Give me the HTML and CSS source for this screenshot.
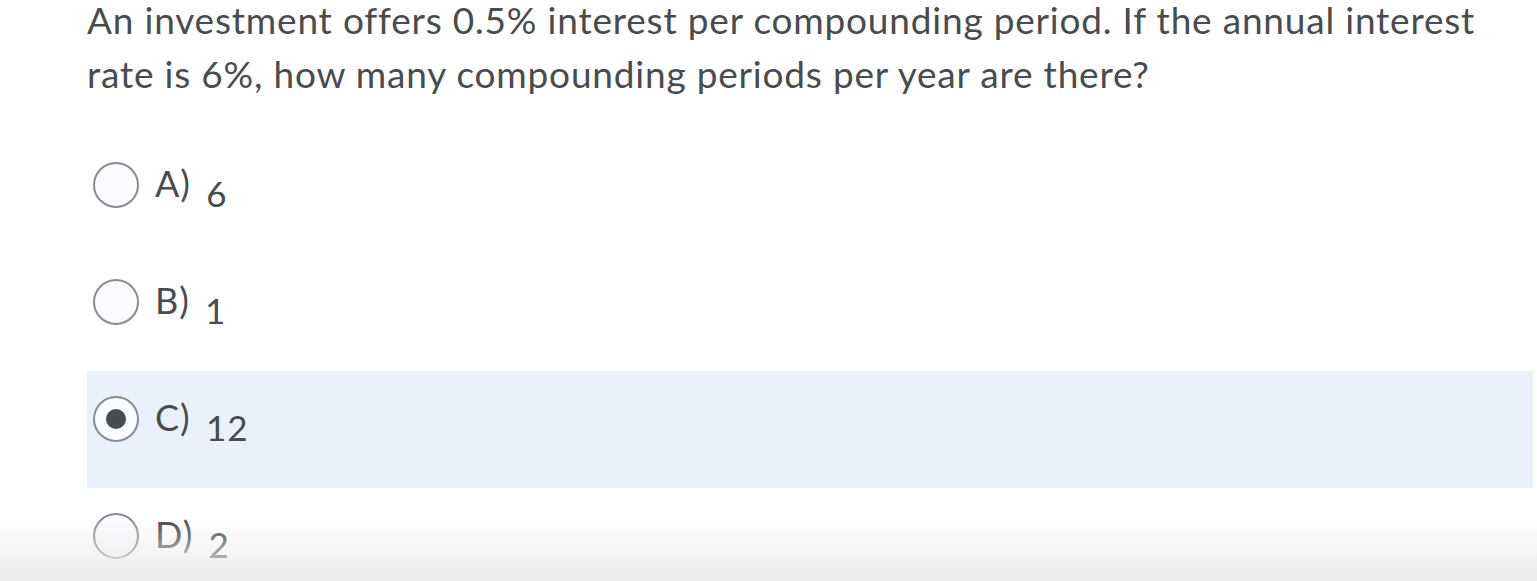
FILE: index.html
```html
<!DOCTYPE html>
<html lang="en">
<head>
<meta charset="utf-8">
<title>Quiz question</title>
<link rel="stylesheet" href="styles.css">
</head>
<body>
<main class="question">
  <p class="question-text">An investment offers 0.5% interest per compounding period. If the annual interest rate is 6%, how many compounding periods per year are there?</p>
  <ul class="options">
    <li class="option"><span class="radio"></span><span class="label">A) <span class="answer">6</span></span></li>
    <li class="option"><span class="radio"></span><span class="label">B) <span class="answer">1</span></span></li>
    <li class="option selected"><span class="radio checked"></span><span class="label">C) <span class="answer">12</span></span></li>
    <li class="option"><span class="radio"></span><span class="label">D) <span class="answer">2</span></span></li>
  </ul>
</main>
<div class="footer-fade"></div>
</body>
</html>
```
FILE: styles.css
```css
html, body {
  margin: 0;
  padding: 0;
  background: #ffffff;
  overflow: hidden;
}
body {
  font-family: Lato, "Open Sans", sans-serif;
  color: #494c4e;
}
.question {
  padding: 0 4px 0 87px;
  margin-top: -7px;
}
.question-text {
  margin: 0;
  font-size: 37px;
  line-height: 54px;
  letter-spacing: 0.8px;
  width: 1420px;
}
.options {
  list-style: none;
  margin: 36px 0 0 0;
  padding: 0;
}
.option {
  display: flex;
  align-items: flex-start;
  gap: 16px;
  height: 117px;
  box-sizing: border-box;
  padding: 25px 0 0 6px;
}
.option.selected {
  background: #eaf1fb;
}
.radio {
  width: 46px;
  height: 46px;
  box-sizing: border-box;
  border: 2px solid #898b8d;
  border-radius: 50%;
  background: #f9fbfe;
  display: flex;
  align-items: center;
  justify-content: center;
  flex: none;
}
.radio.checked::after {
  content: "";
  width: 20px;
  height: 20px;
  border-radius: 50%;
  background: #494c4e;
}
.label {
  font-size: 36px;
  line-height: 46px;
  letter-spacing: 1px;
  margin-top: -2px;
}
.answer {
  font-size: 35px;
  vertical-align: -10px;
  margin-left: 5px;
}
.footer-fade {
  position: fixed;
  left: 0;
  right: 0;
  bottom: 0;
  height: 62px;
  background: linear-gradient(to bottom, rgba(235,235,235,0), #ebebeb);
  pointer-events: none;
}
```
